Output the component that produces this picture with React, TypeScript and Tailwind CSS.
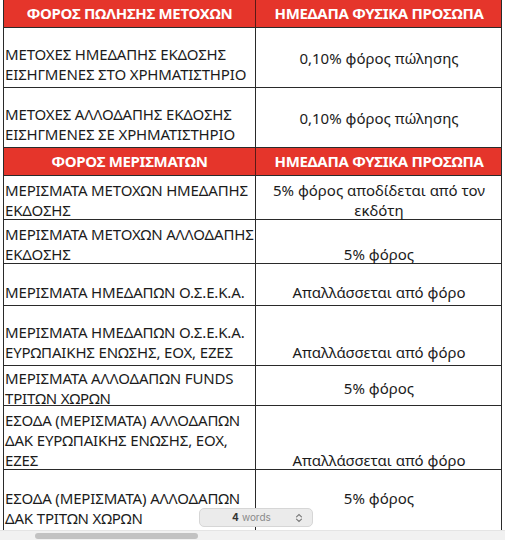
import React from "react";

type Align = "start" | "center" | "end";

const jc: Record<Align, string> = {
  start: "justify-start",
  center: "justify-center",
  end: "justify-end",
};

function Row({
  h,
  left,
  right,
  la,
  ra,
  last,
  pt = "pt-[4px]",
}: {
  h: string;
  left: string[];
  right: string[];
  la: Align;
  ra: Align;
  last?: boolean;
  pt?: string;
}) {
  return (
    <div className={`grid grid-cols-[252px_246px] ${h} ${last ? "" : "border-b border-[#2a2a2a]"}`}>
      <div className={`flex flex-col ${jc[la]} border-r border-[#2a2a2a] pl-[1px] pb-[3px] ${pt}`}>
        {left.map((t, i) => (
          <div key={i} className="leading-[20px] whitespace-nowrap tracking-[-0.15px]">
            {t}
          </div>
        ))}
      </div>
      <div className={`flex flex-col ${jc[ra]} items-center pb-[3px] ${pt}`}>
        {right.map((t, i) => (
          <div key={i} className="leading-[20px] whitespace-nowrap">
            {t}
          </div>
        ))}
      </div>
    </div>
  );
}

function Header({ l, r }: { l: string; r: string }) {
  return (
    <div className="grid grid-cols-[252px_246px] h-[28px] bg-[#e5352b] border-b border-[#2a2a2a] text-white font-bold tracking-[-0.3px]">
      <div className="flex items-center justify-center border-r border-[#5a1a16]">{l}</div>
      <div className="flex items-center justify-center">{r}</div>
    </div>
  );
}

export default function App() {
  return (
    <div
      className="relative w-[505px] h-[540px] overflow-hidden bg-white text-[#1b1b1b] text-[15px]"
      style={{ fontFamily: '"Noto Sans", "Open Sans", sans-serif' }}
    >
      <div className="ml-[3px] w-[499px] border-l border-r border-[#2a2a2a]">
        <Header l="ΦΟΡΟΣ ΠΩΛΗΣΗΣ ΜΕΤΟΧΩΝ" r="ΗΜΕΔΑΠΑ ΦΥΣΙΚΑ ΠΡΟΣΩΠΑ" />
        <Row
          h="h-[60px]"
          left={["ΜΕΤΟΧΕΣ ΗΜΕΔΑΠΗΣ ΕΚΔΟΣΗΣ", "ΕΙΣΗΓΜΕΝΕΣ ΣΤΟ ΧΡΗΜΑΤΙΣΤΗΡΙΟ"]}
          right={["0,10% φόρος πώλησης"]}
          la="end"
          ra="center"
        />
        <Row
          h="h-[60px]"
          left={["ΜΕΤΟΧΕΣ ΑΛΛΟΔΑΠΗΣ ΕΚΔΟΣΗΣ", "ΕΙΣΗΓΜΕΝΕΣ ΣΕ ΧΡΗΜΑΤΙΣΤΗΡΙΟ"]}
          right={["0,10% φόρος πώλησης"]}
          la="end"
          ra="center"
        />
        <Header l="ΦΟΡΟΣ ΜΕΡΙΣΜΑΤΩΝ" r="ΗΜΕΔΑΠΑ ΦΥΣΙΚΑ ΠΡΟΣΩΠΑ" />
        <Row
          h="h-[44px]"
          left={["ΜΕΡΙΣΜΑΤΑ ΜΕΤΟΧΩΝ ΗΜΕΔΑΠΗΣ", "ΕΚΔΟΣΗΣ"]}
          right={["5% φόρος αποδίδεται από τον", "εκδότη"]}
          la="start"
          ra="start"
        />
        <Row
          h="h-[44px]"
          left={["ΜΕΡΙΣΜΑΤΑ ΜΕΤΟΧΩΝ ΑΛΛΟΔΑΠΗΣ", "ΕΚΔΟΣΗΣ"]}
          right={["5% φόρος"]}
          la="start"
          ra="end"
        />
        <Row
          h="h-[42px]"
          left={["ΜΕΡΙΣΜΑΤΑ ΗΜΕΔΑΠΩΝ Ο.Σ.Ε.Κ.Α."]}
          right={["Απαλλάσσεται από φόρο"]}
          la="end"
          ra="end"
        />
        <Row
          h="h-[60px]"
          left={["ΜΕΡΙΣΜΑΤΑ ΗΜΕΔΑΠΩΝ Ο.Σ.Ε.Κ.Α.", "ΕΥΡΩΠΑΙΚΗΣ ΕΝΩΣΗΣ, ΕΟΧ, ΕΖΕΣ"]}
          right={["Απαλλάσσεται από φόρο"]}
          la="end"
          ra="end"
        />
        <Row
          h="h-[40px]"
          left={["ΜΕΡΙΣΜΑΤΑ ΑΛΛΟΔΑΠΩΝ FUNDS", "ΤΡΙΤΩΝ ΧΩΡΩΝ"]}
          right={["5% φόρος"]}
          la="start"
          ra="center"
          pt="pt-[2px]"
        />
        <Row
          h="h-[64px]"
          left={["ΕΣΟΔΑ (ΜΕΡΙΣΜΑΤΑ) ΑΛΛΟΔΑΠΩΝ", "ΔΑΚ ΕΥΡΩΠΑΙΚΗΣ ΕΝΩΣΗΣ, ΕΟΧ,", "ΕΖΕΣ"]}
          right={["Απαλλάσσεται από φόρο"]}
          la="start"
          ra="end"
        />
        <Row
          h="h-[70px]"
          left={["ΕΣΟΔΑ (ΜΕΡΙΣΜΑΤΑ) ΑΛΛΟΔΑΠΩΝ", "ΔΑΚ ΤΡΙΤΩΝ ΧΩΡΩΝ"]}
          right={["5% φόρος"]}
          la="start"
          ra="start"
          pt="pt-[18px]"
          last
        />
      </div>

      {/* word count pill */}
      <div
        className="absolute left-[199px] top-[508px] w-[114px] h-[19px] rounded-[5px] bg-[#ebebeb] border border-[#d6d6d6] flex items-center text-[10px]"
        style={{ fontFamily: '"Inter", "Liberation Sans", sans-serif' }}
      >
        <div className="flex-1 flex justify-center pl-[8px]">
          <span className="font-bold text-[#333]">4</span>
          <span className="ml-[3px] text-[#8a8a8a]">words</span>
        </div>
        <svg width="8" height="10" viewBox="0 0 8 10" className="mr-[9px]">
          <path d="M1.5 3.8 L4 1.5 L6.5 3.8" fill="none" stroke="#777" strokeWidth="1.1" strokeLinecap="round" />
          <path d="M1.5 6.2 L4 8.5 L6.5 6.2" fill="none" stroke="#777" strokeWidth="1.1" strokeLinecap="round" />
        </svg>
      </div>

      {/* horizontal scrollbar */}
      <div className="absolute left-0 bottom-0 w-full h-[10px] bg-[#f1f1f1] border-t border-[#e4e4e4]">
        <div className="absolute left-[35px] top-[2px] w-[163px] h-[6px] rounded-full bg-[#c2c2c2]" />
      </div>
    </div>
  );
}
